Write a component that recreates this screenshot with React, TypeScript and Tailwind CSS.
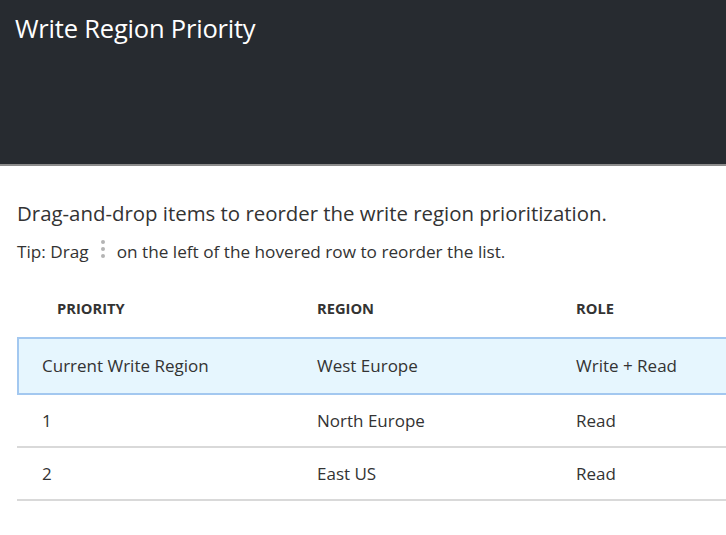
import React from 'react';

const rows = [
  { priority: 'Current Write Region', region: 'West Europe', role: 'Write + Read', current: true },
  { priority: '1', region: 'North Europe', role: 'Read', current: false },
  { priority: '2', region: 'East US', role: 'Read', current: false },
];

function DragDots() {
  return (
    <span className="inline-flex flex-col gap-[3px] mx-[12px] align-middle -mt-[8px]">
      <span className="w-[4px] h-[4px] rounded-full bg-[#b4b4b4]" />
      <span className="w-[4px] h-[4px] rounded-full bg-[#b4b4b4]" />
      <span className="w-[4px] h-[4px] rounded-full bg-[#b4b4b4]" />
    </span>
  );
}

export default function App() {
  return (
    <div className="w-[726px] h-[535px] bg-white overflow-hidden text-[#333] font-['Open_Sans',sans-serif]">
      <div className="h-[166px] bg-[#272b30] border-b-2 border-[#8c8c8c] px-[15px] pt-[10px]">
        <h1 className="text-[25.5px] leading-[36px] text-white tracking-[-0.2px]">Write Region Priority</h1>
      </div>

      <div className="pl-[17px] pt-[33px]">
        <p className="text-[20.4px] leading-[28px] text-[#333]">
          Drag-and-drop items to reorder the write region prioritization.
        </p>
        <p className="text-[17.2px] leading-[24px] mt-[13px] text-[#333]">
          Tip: Drag
          <DragDots />
          on the left of the hovered row to reorder the list.
        </p>

        <div className="mt-[15px]">
          <div className="flex h-[58px] items-center text-[14.7px] font-bold text-[#333]">
            <div className="w-[300px] pl-[40px]">PRIORITY</div>
            <div className="w-[259px]">REGION</div>
            <div className="flex-1">ROLE</div>
          </div>
          {rows.map((r) =>
            r.current ? (
              <div
                key={r.priority}
                className="flex h-[58px] items-center text-[17px] bg-[#e6f6fe] border-y-2 border-l-2 border-[#a3c8f0]"
              >
                <div className="w-[298px] pl-[23px]">{r.priority}</div>
                <div className="w-[259px]">{r.region}</div>
                <div className="flex-1">{r.role}</div>
              </div>
            ) : (
              <div key={r.priority} className="flex h-[53px] items-center text-[17px] border-b-2 border-[#d9d9d9]">
                <div className="w-[300px] pl-[25px]">{r.priority}</div>
                <div className="w-[259px]">{r.region}</div>
                <div className="flex-1">{r.role}</div>
              </div>
            )
          )}
        </div>
      </div>
    </div>
  );
}
